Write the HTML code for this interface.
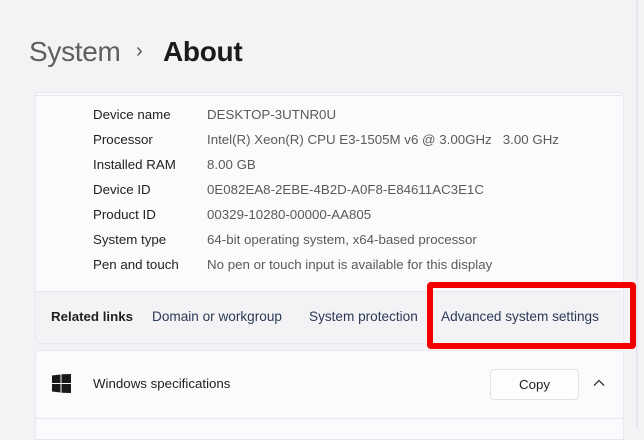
<!DOCTYPE html>
<html><head><meta charset="utf-8"><style>
body{margin:0;width:644px;height:429px;overflow:hidden;background:#f3f3f6;font-family:"Liberation Sans",sans-serif;position:relative;color:#1a1a1a}
.t{position:absolute;white-space:nowrap}
</style></head><body>
<div class="t" style="left:29px;top:36px;font-size:28px;color:#5f5f5f;letter-spacing:-0.3px">System</div>
<div class="t" style="left:136px;top:40px;font-size:20px;color:#555">›</div>
<div class="t" style="left:163px;top:36px;font-size:28px;font-weight:bold;color:#1b1b1b;letter-spacing:-0.3px">About</div>

<div style="position:absolute;left:35px;top:92px;width:587px;height:250px;background:#fbfbfd;border:1px solid #e8e8ec;border-radius:4px"></div>
<div style="position:absolute;left:36px;top:95px;width:586px;height:1px;background:#e6e6ea"></div>
<div style="position:absolute;left:36px;top:291px;width:586px;height:51px;background:#f3f3f6;border-top:1px solid #e6e6ea"></div>

<div style="position:absolute;left:93px;top:102px;font-size:13.3px;line-height:25px;color:#1f1f1f">Device name<br>Processor<br>Installed RAM<br>Device ID<br>Product ID<br>System type<br>Pen and touch</div>
<div style="position:absolute;left:207px;top:102px;font-size:13.3px;line-height:25px;color:#5a5a5a;white-space:nowrap">DESKTOP-3UTNR0U<br>Intel(R) Xeon(R) CPU E3-1505M v6 @ 3.00GHz &nbsp; 3.00 GHz<br>8.00 GB<br>0E082EA8-2EBE-4B2D-A0F8-E84611AC3E1C<br>00329-10280-00000-AA805<br>64-bit operating system, x64-based processor<br>No pen or touch input is available for this display</div>

<div class="t" style="left:51px;top:309px;font-size:13.3px;font-weight:bold;color:#1f1f1f">Related links</div>
<div class="t" style="left:152px;top:309px;font-size:13.6px;color:#2b3a55">Domain or workgroup</div>
<div class="t" style="left:309px;top:309px;font-size:13.6px;color:#2b3a55">System protection</div>
<div class="t" style="left:441px;top:309px;font-size:13.6px;color:#2b3a55">Advanced system settings</div>
<div style="position:absolute;left:427px;top:282px;width:197px;height:55px;border:6px solid #f20000;border-radius:4px"></div>

<div style="position:absolute;left:35px;top:350px;width:587px;height:67px;background:#fbfbfd;border:1px solid #e8e8ec;border-radius:4px"></div>
<div style="position:absolute;left:35px;top:418px;width:587px;height:20px;background:#fbfbfd;border:1px solid #e8e8ec"></div>
<svg style="position:absolute;left:52px;top:374px" width="19" height="19" viewBox="0 0 19 19"><path d="M0 1.5L8.5 0.5V9H0ZM9.5 0.3L19 0V9H9.5ZM0 10H8.5V18.5L0 17.5ZM9.5 10H19V19L9.5 18.7Z" fill="#1a1a1a"/></svg>
<div class="t" style="left:93px;top:376px;font-size:13.3px;color:#1f1f1f">Windows specifications</div>
<div style="position:absolute;left:490px;top:369px;width:87px;height:29px;background:#fdfdfe;border:1px solid #e2e2e6;border-radius:4px;font-size:13.3px;line-height:29px;text-align:center;color:#1f1f1f">Copy</div>
<svg style="position:absolute;left:593px;top:379px" width="12" height="8" viewBox="0 0 12 8"><path d="M1 6.5L6 1.5L11 6.5" stroke="#333" stroke-width="1.3" fill="none"/></svg>
<div style="position:absolute;left:636px;top:0;width:2px;height:429px;background:#e8e8ec"></div>
</body></html>
